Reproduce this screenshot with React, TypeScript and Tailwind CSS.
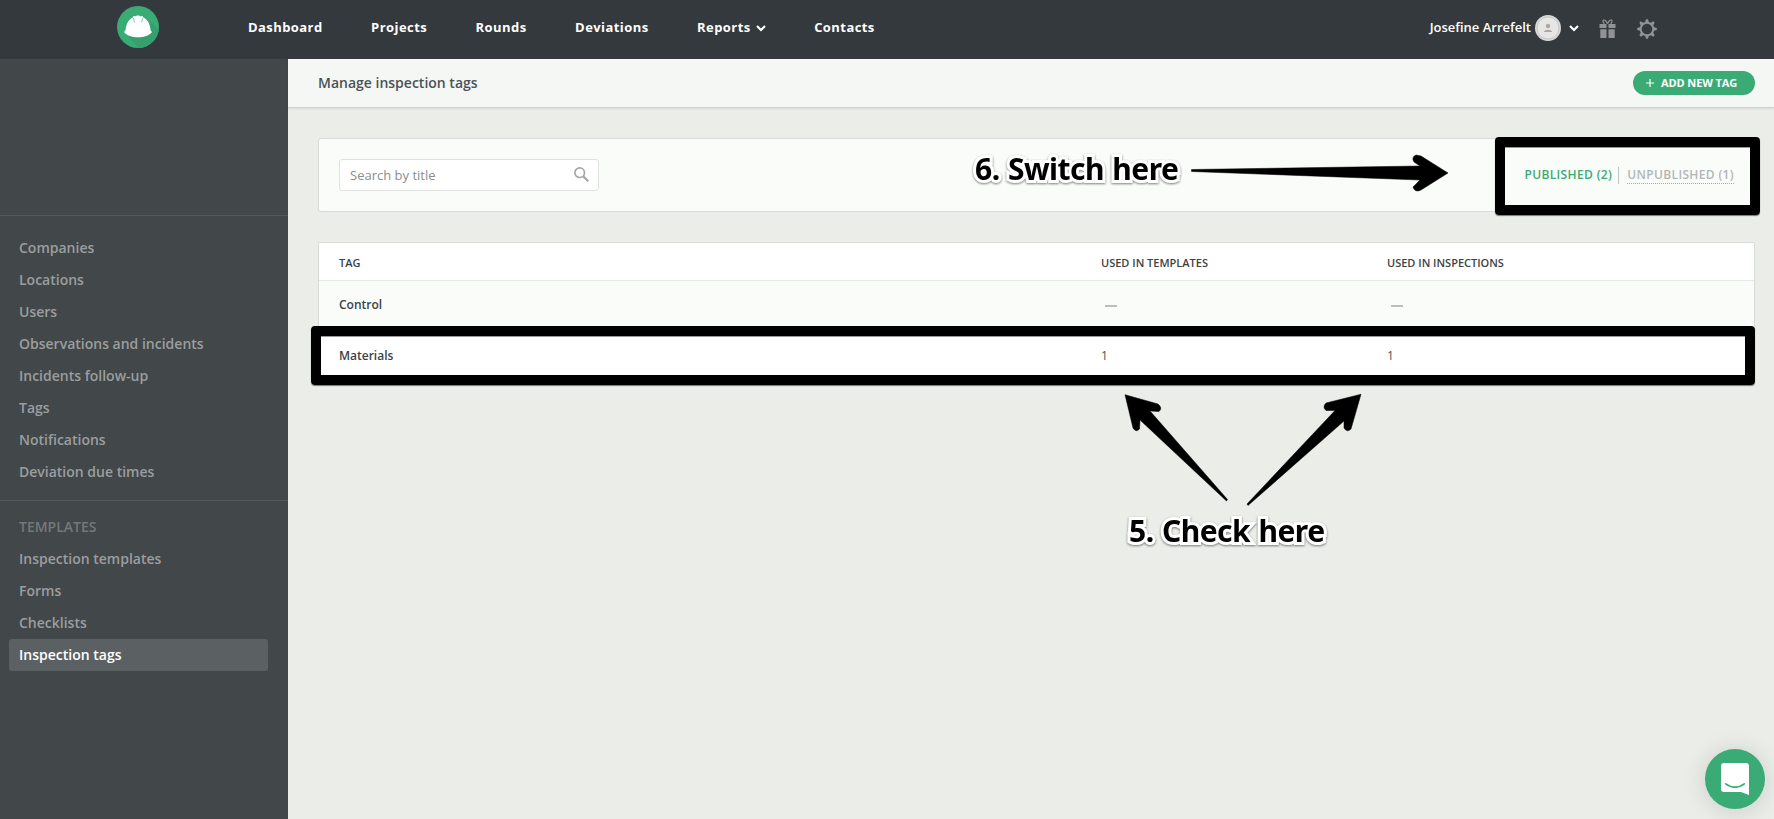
import React from "react";
import clsx from "clsx";

const navLinks = ["Dashboard", "Projects", "Rounds", "Deviations", "Reports", "Contacts"];

const settingsLinks = [
  "Companies",
  "Locations",
  "Users",
  "Observations and incidents",
  "Incidents follow-up",
  "Tags",
  "Notifications",
  "Deviation due times",
];

const templateLinks = ["Inspection templates", "Forms", "Checklists", "Inspection tags"];

const tags = [
  { title: "Control", templates: 0, inspections: 0 },
  { title: "Materials", templates: 1, inspections: 1 },
];

function Chevron() {
  return (
    <svg width="10" height="7" viewBox="0 0 10 7" fill="none" stroke="currentColor" strokeWidth="2.200">
      <path d="M1 1l4 4 4-4" />
    </svg>
  );
}

function Logo() {
  return (
    <svg width="42" height="42" viewBox="0 0 42 42">
      <defs>
        <clipPath id="logo-clip">
          <circle cx="21" cy="21" r="21" />
        </clipPath>
      </defs>
      <circle cx="21" cy="21" r="21" fill="#3aab74" />
      <path d="M33 15l14 14v18H26L8 27l26-2z" fill="#36a06d" clipPath="url(#logo-clip)" />
      <path
        d="M7 26c1-1 1.500-1.500 1.700-3C9.300 17.500 12.200 13 16 11.200c0-1.200 2-1.500 2.500-.6.500-1.400 4.400-1.400 5 0 .6-.9 2.500-.6 2.500.6 4 1.800 6.900 6.300 7.400 11.800.1 1.500.7 2 1.600 3-2.500 3.600-8 5.300-14 5.300S9.500 29.600 7 26z"
        fill="#fff"
      />
      <path d="M16.300 12l1.200 4.500M25.700 12l-1.200 4.500" stroke="#3aab74" strokeWidth="0.600" />
    </svg>
  );
}

function Avatar() {
  return (
    <svg width="26" height="26" viewBox="0 0 26 26">
      <circle cx="13" cy="13" r="13" fill="#d9d9d8" />
      <circle cx="13" cy="13" r="11" fill="#e6e6e4" stroke="#b9babb" strokeWidth="0.700" />
      <circle cx="13" cy="11" r="2.200" fill="#a9a9a9" />
      <path d="M9 17c0-3 8-3 8 0z" fill="#a9a9a9" />
    </svg>
  );
}

function GiftIcon() {
  return (
    <svg width="17" height="19" viewBox="0 0 17 19" fill="#909395">
      <path d="M0.500 5h7v4h-7zM9.500 5h7v4h-7zM1.300 10.200h6.200V19H1.300zM9.500 10.200h6.200V19H9.500z" />
      <path
        d="M8.500 4.800C7.500 2 5.800.6 4.600 1.100 3.300 1.800 4 3.800 5.500 4.600M8.500 4.800C9.500 2 11.200.6 12.400 1.100c1.300.7.600 2.700-.9 3.500"
        fill="none"
        stroke="#909395"
        strokeWidth="1.200"
      />
    </svg>
  );
}

const gearTeeth = [0, 45, 90, 135, 180, 225, 270, 315];

function GearIcon() {
  return (
    <svg width="20" height="20" viewBox="0 0 20 20">
      <circle cx="10" cy="10" r="6.300" fill="none" stroke="#909395" strokeWidth="2" />
      {gearTeeth.map((angle) => (
        <path key={angle} d="M8 3.700L9 0.200h2l1 3.500z" fill="#909395" transform={`rotate(${angle} 10 10)`} />
      ))}
    </svg>
  );
}

function Header() {
  return (
    <header className="flex h-[59px] shrink-0 items-center bg-[#34393d] pl-[117px] pr-[117px] text-white">
      <div className="-mt-[5px]">
        <Logo />
      </div>
      <nav className="ml-[89px] flex gap-[48.5px] pb-[3px] text-[13px] font-bold tracking-[0.43px]">
        {navLinks.map((link) => (
          <a key={link} className="flex items-center gap-[5px]">
            {link}
            {link === "Reports" && <Chevron />}
          </a>
        ))}
      </nav>
      <div className="ml-auto flex items-center pb-[3px]">
        <span className="text-[13px] font-semibold">Josefine Arrefelt</span>
        <span className="ml-1">
          <Avatar />
        </span>
        <span className="ml-2">
          <Chevron />
        </span>
        <span className="ml-5">
          <GiftIcon />
        </span>
        <span className="ml-[21px] pt-[2px]">
          <GearIcon />
        </span>
      </div>
    </header>
  );
}

function SidebarLink({ label, active }: { label: string; active?: boolean }) {
  return (
    <a
      className={clsx(
        "ml-[9px] mr-5 flex h-8 items-center rounded-[3px] pb-[2px] pl-[10px] text-[14px] font-semibold",
        active ? "bg-[#5b6163] text-white" : "text-[#9b9e9f]"
      )}
    >
      {label}
    </a>
  );
}

function Sidebar() {
  return (
    <aside className="w-72 shrink-0 bg-[#42474a] pt-[156px]">
      <div className="border-t border-[#56595c] pb-3 pt-4">
        {settingsLinks.map((link) => (
          <SidebarLink key={link} label={link} />
        ))}
      </div>
      <div className="border-t border-[#56595c] pt-[10px]">
        <p className="flex h-8 items-center pb-[2px] pl-[19px] text-[14px] font-semibold text-[#75787a]">TEMPLATES</p>
        {templateLinks.map((link) => (
          <SidebarLink key={link} label={link} active={link === "Inspection tags"} />
        ))}
      </div>
    </aside>
  );
}

function FilterBar() {
  return (
    <div className="flex h-[74px] items-center justify-between rounded-[3px] border border-[#d9dbd8] bg-[#fafcfa] pl-5 pr-5">
      <div className="flex h-8 w-[260px] items-center justify-between rounded-[3px] border border-[#e0e2e0] bg-white pl-[10px] pr-[9px]">
        <span className="pt-[2px] text-[13px] text-[#8a8e90]">Search by title</span>
        <svg className="mb-px" width="15" height="15" viewBox="0 0 15 15" fill="none" stroke="#a5a8a9">
          <circle cx="5.700" cy="5.700" r="4.800" strokeWidth="1.700" />
          <path d="M9.200 9.200l5 5" strokeWidth="2.200" />
        </svg>
      </div>
      <div className="flex items-center text-[12px] font-semibold tracking-[0.36px]">
        <span className="text-[#3aab74]">PUBLISHED (2)</span>
        <span className="ml-[6px] h-[17px] w-px bg-[#bfc2c2]"></span>
        <span className="ml-2 border-b border-dotted border-[#a5a8a9] leading-[17px] text-[#b3b6b6]">UNPUBLISHED (1)</span>
      </div>
    </div>
  );
}

function Count({ value }: { value: number }) {
  if (value === 0) {
    return <span className="ml-1 mt-[2px] block h-[2px] w-3 bg-[#bcbebd]"></span>;
  }
  return <span className="text-[12px] text-[#4c5357]">{value}</span>;
}

function TagTable() {
  return (
    <div className="mt-[30px] border border-[#d9dbd8] bg-white text-[#3b4246]">
      <div className="grid h-[38px] grid-cols-[762px_286px_1fr] items-center border-b border-[#e6e8e6] pl-5 pt-[3px] text-[11px] font-semibold">
        <span>TAG</span>
        <span>USED IN TEMPLATES</span>
        <span>USED IN INSPECTIONS</span>
      </div>
      {tags.map((tag, i) => (
        <div
          key={tag.title}
          className={clsx(
            "grid grid-cols-[762px_286px_1fr] items-center pl-5",
            i % 2 === 0 ? "h-[49px] bg-[#fafcfa] pb-[2px]" : "h-[51px] bg-white"
          )}
        >
          <span className="text-[12px] font-semibold">{tag.title}</span>
          <Count value={tag.templates} />
          <Count value={tag.inspections} />
        </div>
      ))}
    </div>
  );
}

function Note({ className, children }: { className: string; children: React.ReactNode }) {
  return (
    <p
      className={clsx(
        "absolute whitespace-nowrap font-['Noto_Sans',sans-serif] text-[30px] font-bold leading-9 tracking-[-0.5px] text-black [word-spacing:1px] [-webkit-text-stroke:6px_white] [filter:drop-shadow(0_1px_1px_rgba(0,0,0,0.5))] [paint-order:stroke_fill]",
        className
      )}
    >
      {children}
    </p>
  );
}

// Tutorial marks drawn on top of the page
function Annotations() {
  return (
    <div className="pointer-events-none absolute inset-0">
      <div className="absolute left-[1495px] top-[137px] h-[78px] w-[265px] rounded-[4px] border-[10px] border-black shadow-[0_1px_1px_rgba(0,0,0,0.5),inset_0_1px_0_rgba(0,0,0,0.4)]"></div>
      <div className="absolute left-[311px] top-[326px] h-[59px] w-[1444px] rounded-[4px] border-[10px] border-black shadow-[0_1px_1px_rgba(0,0,0,0.5),inset_0_1px_0_rgba(0,0,0,0.4)]"></div>
      <svg className="absolute inset-0" width="1774" height="819" viewBox="0 0 1774 819" stroke="#000" strokeLinejoin="round">
        <path d="M1191.500 169.500L1420 166 1414 162Q1411 157 1416 155L1421 156 1448 173 1421 190Q1415 193 1413 187L1420 180 1191.500 171.500z" strokeWidth="0.500" />
        <path d="M1125 394.700L1158 404Q1163 408 1159 411.500L1150 411 1227.500 499.500 1226.500 501 1140 420 1139.500 429Q1136 433 1133 428z" strokeWidth="0.500" />
        <path d="M1361 394.300L1326 403Q1322 407 1326 410.500L1335 410.500 1247 504 1248 505.500 1344 421 1344 428Q1347 433 1351 429z" strokeWidth="0.500" />
      </svg>
      <Note className="left-[975px] top-[151px]">6. Switch here</Note>
      <Note className="left-[1129px] top-[513px]">5. Check here</Note>
    </div>
  );
}

function ChatButton() {
  return (
    <button className="absolute bottom-[10px] right-[9px] flex h-[60px] w-[60px] items-center justify-center rounded-full bg-[#3aab74] shadow-[0_2px_24px_rgba(0,0,0,0.14)]">
      <svg width="28" height="32" viewBox="0 0 28 32">
        <path d="M3 0h22a3 3 0 0 1 3 3v29l-8-3H3a3 3 0 0 1-3-3V3a3 3 0 0 1 3-3z" fill="#fff" />
        <path d="M4.700 20.800c5.500 4.400 13 4.400 18.600 0" fill="none" stroke="#3aab74" strokeWidth="1.700" strokeLinecap="round" />
      </svg>
    </button>
  );
}

export default function App() {
  return (
    <div className="relative flex h-[819px] w-[1774px] flex-col overflow-hidden bg-[#ebede8] font-['Open_Sans',sans-serif]">
      <Header />
      <div className="flex flex-1">
        <Sidebar />
        <main className="flex-1">
          <div className="flex h-[49px] items-center justify-between border-b border-[#cfd2cf] bg-[#f5f7f4] pl-[30px] pr-[19px] shadow-[0_1px_2px_rgba(0,0,0,0.08)]">
            <h1 className="pb-[2px] text-[14px] font-semibold text-[#4a5257]">Manage inspection tags</h1>
            <button className="flex h-6 w-[122px] items-center rounded-full bg-[#3aab74] pl-[13px] text-[11px] font-bold text-white">
              <svg width="8" height="8" viewBox="0 0 8 8" stroke="#fff" strokeWidth="1.200">
                <path d="M4 0v8M0 4h8" />
              </svg>
              <span className="ml-[7px] tracking-[-0.1px]">ADD NEW TAG</span>
            </button>
          </div>
          <div className="pl-[30px] pr-[19px] pt-[30px]">
            <FilterBar />
            <TagTable />
          </div>
        </main>
      </div>
      <Annotations />
      <ChatButton />
    </div>
  );
}
